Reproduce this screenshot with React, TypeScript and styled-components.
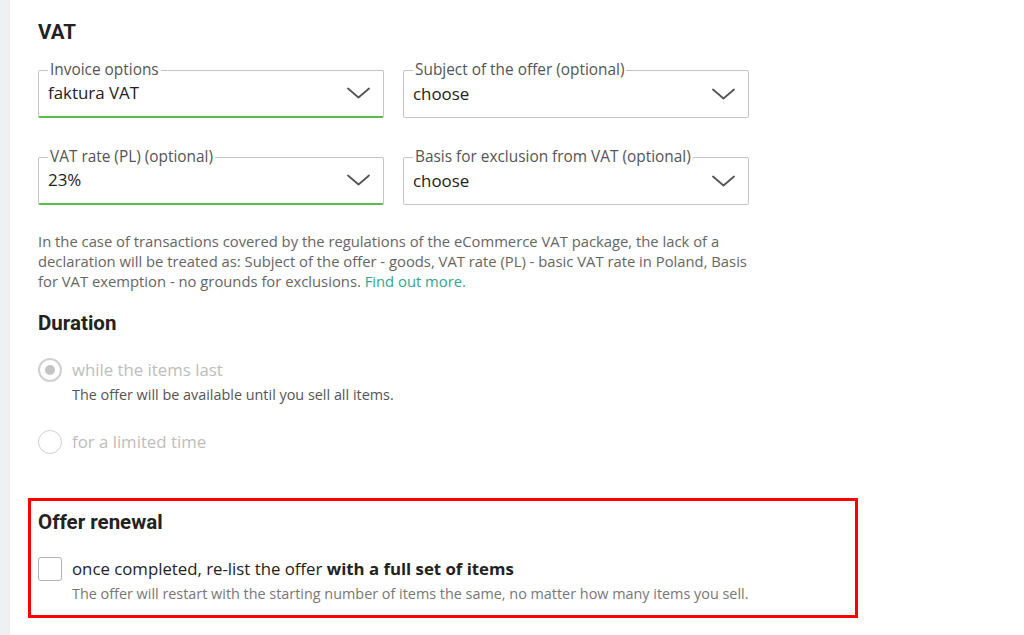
import React from "react";
import styled, { createGlobalStyle } from "styled-components";

const GlobalStyle = createGlobalStyle`
  html, body {
    margin: 0;
    padding: 0;
    background: #ffffff;
  }
  body {
    font-family: "Open Sans", "Noto Sans", sans-serif;
    color: #222222;
  }
  * {
    box-sizing: border-box;
  }
`;

const Page = styled.div`
  display: flex;
  min-height: 635px;
`;

const SideStrip = styled.div`
  width: 10px;
  flex-shrink: 0;
  background: #eef0f2;
`;

const Content = styled.main`
  flex: 1;
  padding: 20px 0 0 28px;
`;

const SectionTitle = styled.h2`
  margin: 0;
  font-family: Roboto, "Liberation Sans", sans-serif;
  font-size: 20.5px;
  line-height: 24px;
  font-weight: 700;
  color: #222222;
`;

const FieldGrid = styled.div`
  margin-top: 18px;
  display: grid;
  grid-template-columns: 346px 346px;
  column-gap: 19px;
  row-gap: 31px;
`;

const SelectBox = styled.fieldset<{ $filled?: boolean }>`
  margin: 0;
  height: 56px;
  padding: 0 10px 0 9px;
  border: 1px solid #c4c4c4;
  border-bottom: ${(p) => (p.$filled ? "2px solid #5bbd4c" : "1px solid #c4c4c4")};
  border-radius: 2px;
  display: flex;
  align-items: center;
  justify-content: space-between;
`;

const SelectLabel = styled.legend`
  margin-left: 0;
  padding: 0 2px;
  font-size: 15.4px;
  line-height: 16px;
  color: #555555;
`;

const SelectValue = styled.span`
  margin-top: -8px;
  font-size: 16.9px;
  line-height: 24px;
  color: #222222;
`;

const Chevron = styled.svg`
  margin-top: -8px;
  margin-right: 3px;
  width: 23px;
  height: 12px;
  flex-shrink: 0;
`;

const HelpText = styled.p`
  margin: 26px 0 0;
  width: 712px;
  font-size: 14.8px;
  line-height: 20px;
  color: #666666;
`;

const Link = styled.a`
  color: #35a68c;
  text-decoration: none;
`;

const DurationTitle = styled(SectionTitle)`
  margin-top: 20px;
`;

const OptionList = styled.div`
  margin-top: 23px;
  display: flex;
  flex-direction: column;
  gap: 25px;
`;

const Option = styled.div`
  display: grid;
  grid-template-columns: 24px 1fr;
  column-gap: 10px;
  row-gap: 3px;
  align-items: center;
`;

const Radio = styled.span<{ $checked?: boolean }>`
  width: 24px;
  height: 24px;
  border-radius: 50%;
  border: ${(p) => (p.$checked ? "2px" : "1.5px")} solid #d0d0d0;
  display: grid;
  place-items: center;

  &::after {
    content: "";
    display: ${(p) => (p.$checked ? "block" : "none")};
    width: 10px;
    height: 10px;
    border-radius: 50%;
    background: #c4c4c4;
  }
`;

const OptionLabel = styled.span<{ $disabled?: boolean }>`
  font-size: 16.8px;
  line-height: 24px;
  color: ${(p) => (p.$disabled ? "#bdbdbd" : "#222222")};
`;

const OptionHint = styled.span<{ $muted?: boolean }>`
  grid-column: 2;
  font-size: 14.4px;
  line-height: 20px;
  color: ${(p) => (p.$muted ? "#777777" : "#555555")};
`;

const HighlightBox = styled.section`
  margin: 44px 0 0 -10px;
  width: 830px;
  border: 3px solid #ff0000;
  padding: 9px 0 11px 7px;
`;

const RenewalOption = styled(Option)`
  margin-top: 23px;
`;

const Checkbox = styled.span`
  width: 24px;
  height: 24px;
  border: 1px solid #b0b0b0;
  border-radius: 3px;
  background: #ffffff;
`;

function ChevronIcon() {
  return (
    <Chevron viewBox="0 0 23 12" fill="none">
      <path d="M1 1.5 L11.5 10.5 L22 1.5" stroke="#555555" strokeWidth="1.8" strokeLinecap="round" strokeLinejoin="round" />
    </Chevron>
  );
}

type SelectProps = { label: string; value: string; filled?: boolean };

function Select({ label, value, filled }: SelectProps) {
  return (
    <SelectBox $filled={filled}>
      <SelectLabel>{label}</SelectLabel>
      <SelectValue>{value}</SelectValue>
      <ChevronIcon />
    </SelectBox>
  );
}

export default function App() {
  return (
    <>
      <GlobalStyle />
      <Page>
        <SideStrip />
        <Content>
          <SectionTitle>VAT</SectionTitle>
          <FieldGrid>
            <Select label="Invoice options" value="faktura VAT" filled />
            <Select label="Subject of the offer (optional)" value="choose" />
            <Select label="VAT rate (PL) (optional)" value="23%" filled />
            <Select label="Basis for exclusion from VAT (optional)" value="choose" />
          </FieldGrid>
          <HelpText>
            In the case of transactions covered by the regulations of the eCommerce VAT package, the lack of a
            declaration will be treated as: Subject of the offer - goods, VAT rate (PL) - basic VAT rate in Poland, Basis
            for VAT exemption - no grounds for exclusions. <Link href="#">Find out more.</Link>
          </HelpText>

          <DurationTitle>Duration</DurationTitle>
          <OptionList>
            <Option>
              <Radio $checked />
              <OptionLabel $disabled>while the items last</OptionLabel>
              <OptionHint>The offer will be available until you sell all items.</OptionHint>
            </Option>
            <Option>
              <Radio />
              <OptionLabel $disabled>for a limited time</OptionLabel>
            </Option>
          </OptionList>

          <HighlightBox>
            <SectionTitle>Offer renewal</SectionTitle>
            <RenewalOption>
              <Checkbox />
              <OptionLabel>
                once completed, re-list the offer <strong>with a full set of items</strong>
              </OptionLabel>
              <OptionHint $muted>
                The offer will restart with the starting number of items the same, no matter how many items you sell.
              </OptionHint>
            </RenewalOption>
          </HighlightBox>
        </Content>
      </Page>
    </>
  );
}
